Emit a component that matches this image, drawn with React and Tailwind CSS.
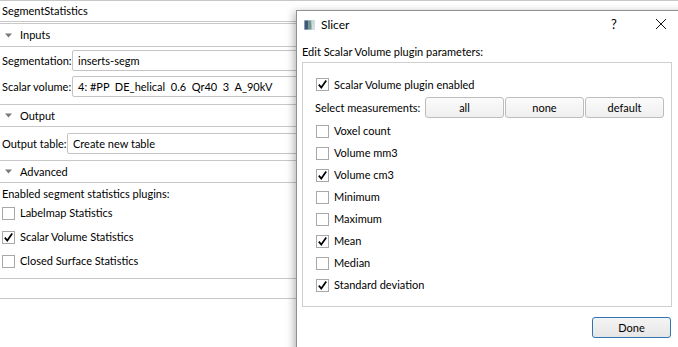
import React from "react";

function Tri() {
  return (
    <svg width="7" height="5" viewBox="0 0 7 5" className="mr-[8px]">
      <path d="M0 0.5 L7 0.5 L3.5 4.5 Z" fill="#7a7a7a" />
    </svg>
  );
}

function Check({ checked }) {
  return (
    <div className="w-[13px] h-[13px] border border-[#a8a8a8] bg-white flex items-center justify-center shrink-0">
      {checked && (
        <svg width="11" height="11" viewBox="0 0 11 11">
          <path d="M1.8 5.6 L4.3 8.6 L9.2 1.6" fill="none" stroke="#000" strokeWidth="1.7" />
        </svg>
      )}
    </div>
  );
}

function Header({ children, extra = "" }) {
  return (
    <div className={"h-[23px] border-y border-[#c8c8c8] flex items-center pl-[5px] " + extra}>
      <Tri />
      <span>{children}</span>
    </div>
  );
}

function Field({ label, value, labelW }) {
  return (
    <div className="flex items-center h-[21px]">
      <div className={"pl-[2px] shrink-0 whitespace-nowrap " + labelW}>{label}</div>
      <div className="flex-1 h-[21px] border border-[#c4c4c4] rounded-[2px] bg-white flex items-center pl-[5px] whitespace-pre">
        {value}
      </div>
    </div>
  );
}

function CheckRow({ checked, label, cls = "" }) {
  return (
    <div className={"flex items-center gap-[5px] " + cls}>
      <Check checked={checked} />
      <span className="whitespace-nowrap">{label}</span>
    </div>
  );
}

function Btn({ children }) {
  return (
    <div className="w-[79px] h-[21px] border border-[#bdbdbd] rounded-[3px] bg-gradient-to-b from-[#fbfbfb] to-[#efefef] flex items-center justify-center">
      {children}
    </div>
  );
}

export default function App() {
  const measures = [
    ["Voxel count", false],
    ["Volume mm3", false],
    ["Volume cm3", true],
    ["Minimum", false],
    ["Maximum", false],
    ["Mean", true],
    ["Median", false],
    ["Standard deviation", true],
  ];
  return (
    <div className="relative w-[678px] h-[347px] overflow-hidden bg-white text-[11px] leading-[16px] text-black font-['Lato',sans-serif]">
      {/* Left module panel */}
      <div className="flex flex-col">
        <div className="h-[22px] border-y border-[#c8c8c8] flex items-center pl-[2px]">SegmentStatistics</div>
        <Header extra="mt-px h-[24px]">Inputs</Header>
        <div className="flex flex-col gap-[5px] pt-[3px] pb-[7px]">
          <Field label="Segmentation:" value="inserts-segm" labelW="w-[72px]" />
          <Field label="Scalar volume:" value="4: #PP  DE_helical  0.6  Qr40  3  A_90kV" labelW="w-[72px]" />
        </div>
        <Header>Output</Header>
        <div className="pt-[6px] pb-[6px]">
          <Field label="Output table:" value="Create new table" labelW="w-[67px]" />
        </div>
        <Header>Advanced</Header>
        <div className="flex flex-col pt-[2px] pb-[8px] pl-[2px] border-b border-[#c8c8c8]">
          <div className="h-[18px] flex items-center">Enabled segment statistics plugins:</div>
          <div className="flex flex-col gap-[6px] mt-[1px]">
            <CheckRow checked={false} label="Labelmap Statistics" cls="h-[18px]" />
            <CheckRow checked={true} label="Scalar Volume Statistics" cls="h-[18px]" />
            <CheckRow checked={false} label="Closed Surface Statistics" cls="h-[18px]" />
          </div>
        </div>
        <div className="h-[20px] border-b border-[#c8c8c8]" />
      </div>

      {/* Dialog window */}
      <div className="absolute left-[296px] top-[10px] w-[400px] h-[350px] border border-[#8f8f8f] bg-white shadow-[-2px_2px_8px_rgba(0,0,0,0.3)] flex flex-col">
        <div className="h-[27px] bg-white flex items-center pl-[7px] relative">
          <svg width="11" height="10" viewBox="0 0 11 10" className="mr-[6px]">
            <rect x="0" y="0" width="11" height="10" fill="#d8dde2" />
            <rect x="0.5" y="0.5" width="4" height="9" fill="#3f5a78" />
            <rect x="4.5" y="0.5" width="3" height="9" fill="#6f9a8a" />
            <rect x="7.5" y="0.5" width="3" height="4" fill="#c9d6e0" />
          </svg>
          <span className="text-[12px]">Slicer</span>
          <span className="absolute left-[314px] top-[5px] text-[13px]">?</span>
          <svg width="12" height="12" viewBox="0 0 12 12" className="absolute left-[358px] top-[7px]">
            <path d="M1 1 L11 11 M11 1 L1 11" stroke="#111" strokeWidth="1" />
          </svg>
        </div>
        <div className="pl-[5px] pt-[6px] flex flex-col">
          <div className="h-[16px] flex items-center whitespace-nowrap">Edit Scalar Volume plugin parameters:</div>
          <div className="mt-[2px] w-[370px] h-[245px] border border-[#cfcfcf] pl-[13px] pr-[7px] pt-[15px] flex flex-col">
            <CheckRow checked={true} label="Scalar Volume plugin enabled" cls="h-[13px]" />
            <div className="mt-[6px] flex items-center h-[21px]">
              <span className="flex-1 -ml-[1px] whitespace-nowrap">Select measurements:</span>
              <div className="flex gap-[1px]">
                <Btn>all</Btn>
                <Btn>none</Btn>
                <Btn>default</Btn>
              </div>
            </div>
            <div className="flex flex-col mt-[2px]">
              {measures.map(([l, c]) => (
                <CheckRow key={l} checked={c} label={l} cls="h-[22px]" />
              ))}
            </div>
          </div>
          <div className="flex mt-[10px] w-[370px] justify-end pr-px">
            <div className="w-[79px] h-[21px] border border-[#2f74b5] rounded-[3px] bg-gradient-to-b from-[#f4f4f4] to-[#e6e6e6] flex items-center justify-center">
              Done
            </div>
          </div>
        </div>
      </div>
    </div>
  );
}
